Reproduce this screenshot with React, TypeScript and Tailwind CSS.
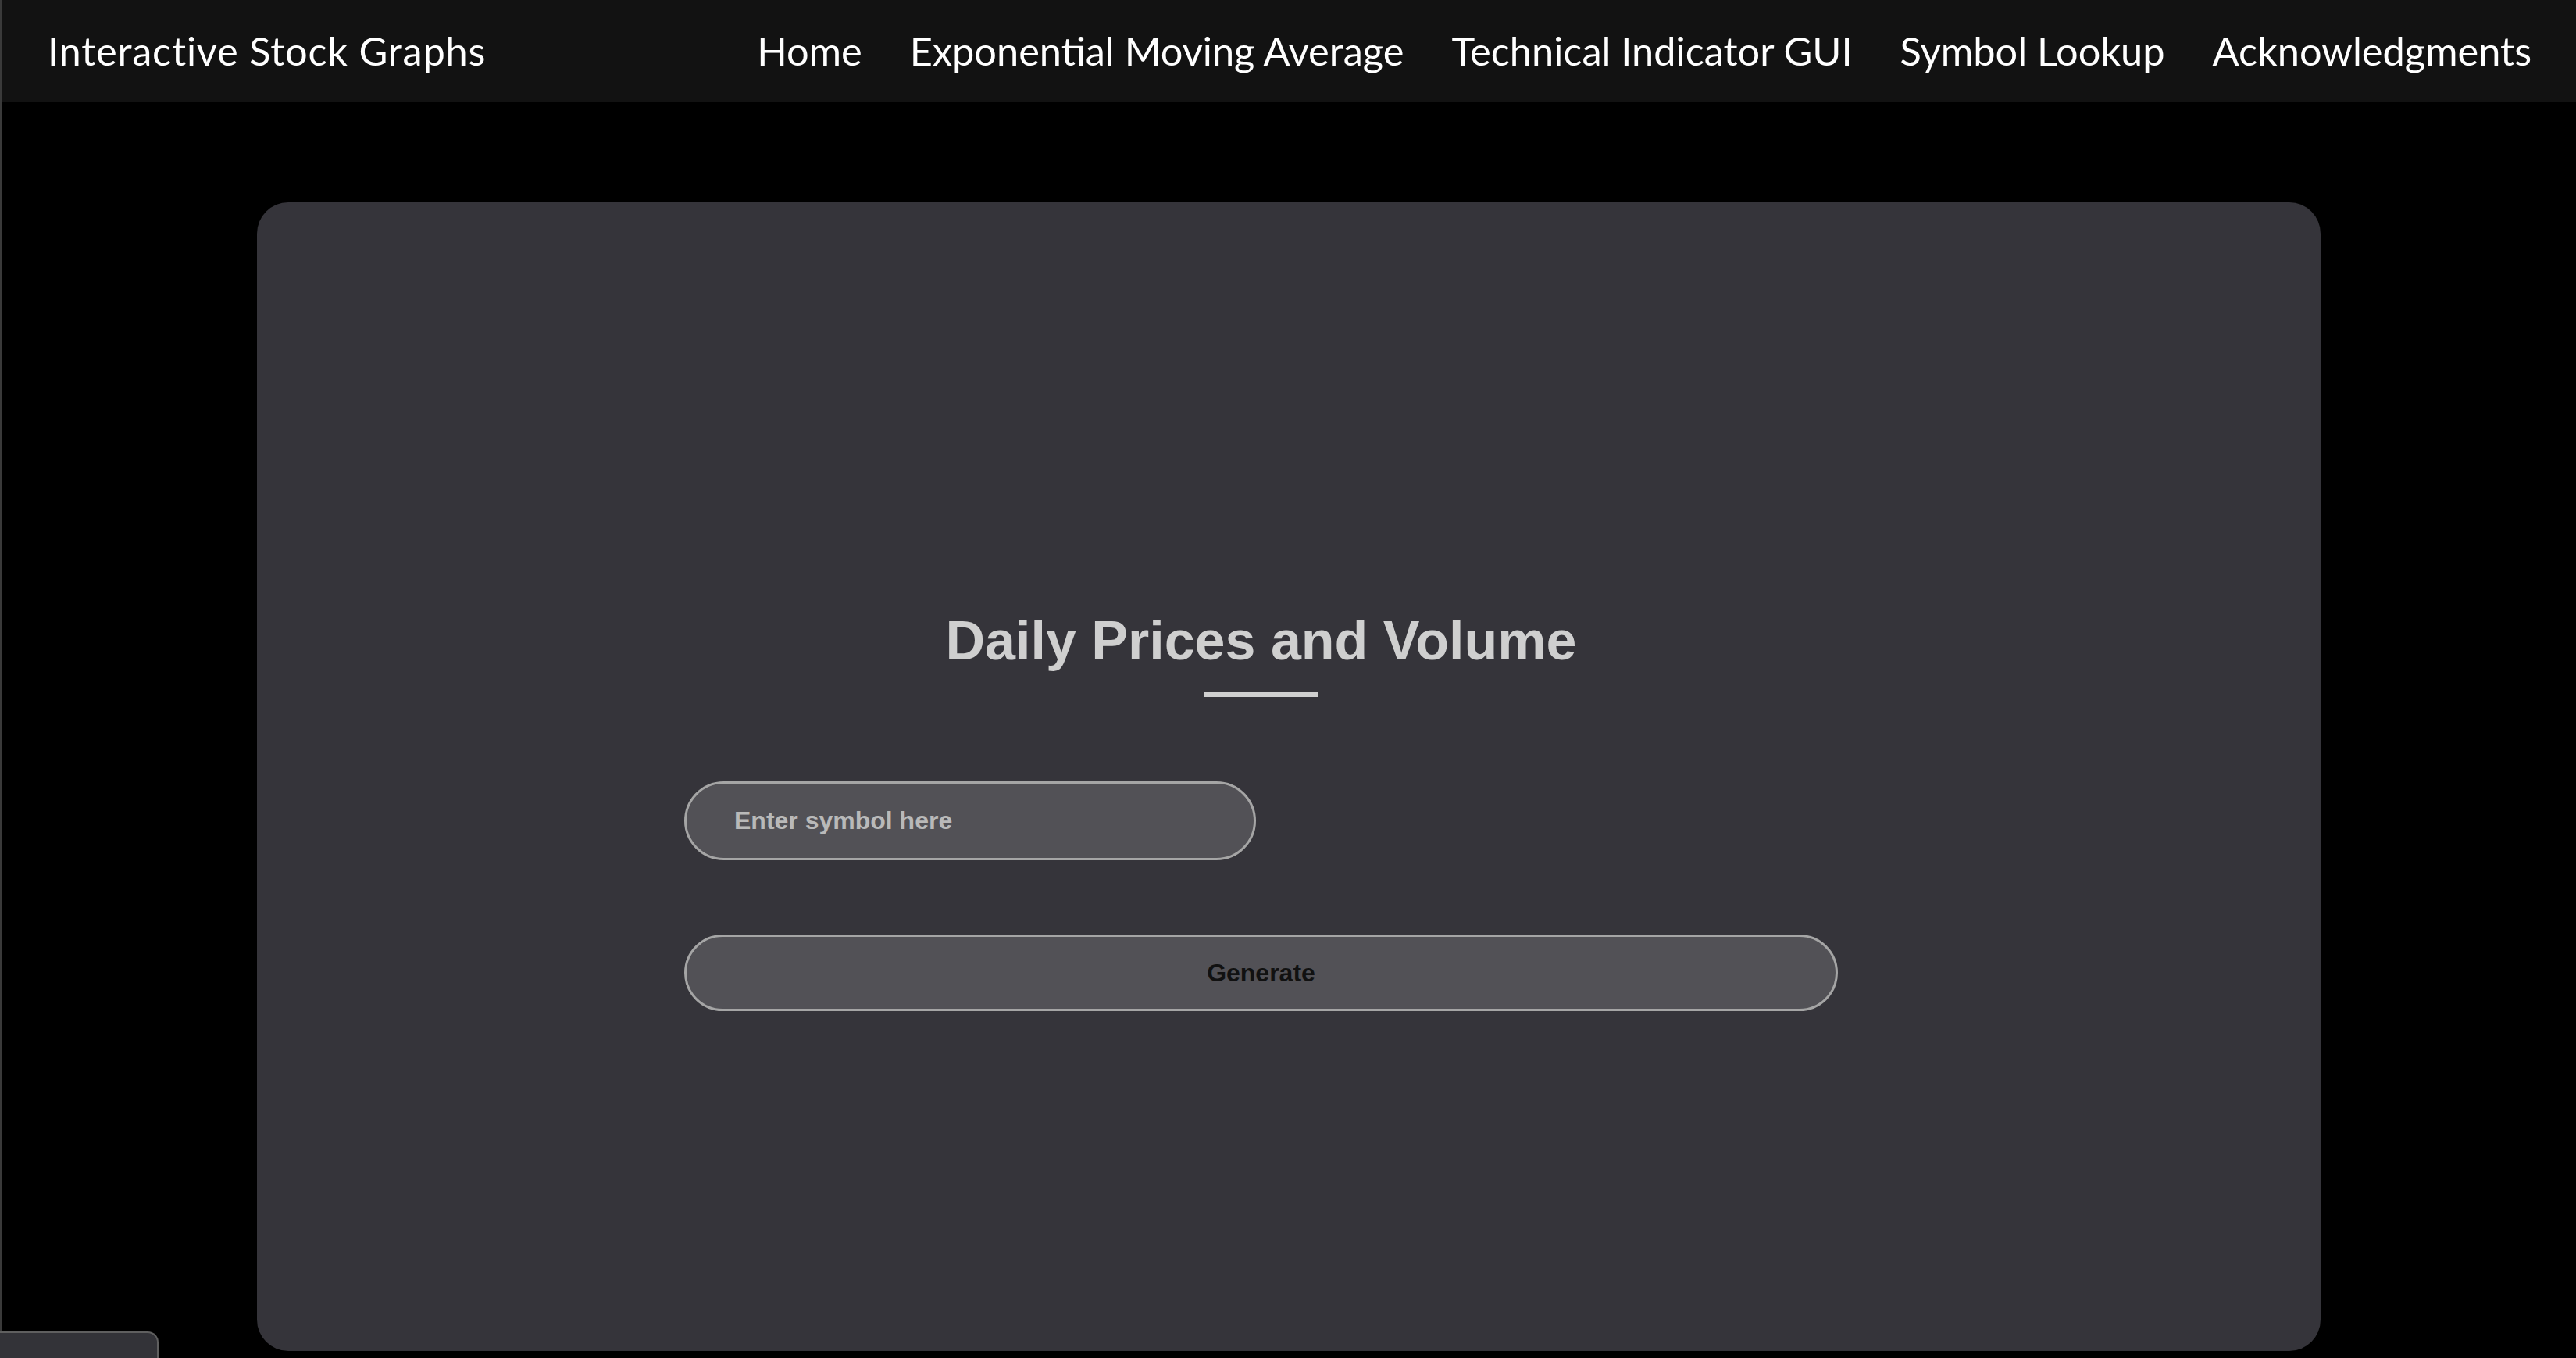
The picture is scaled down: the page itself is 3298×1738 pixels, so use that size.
import React, { useState } from "react";

const links = ["Home", "Exponential Moving Average", "Technical Indicator GUI", "Symbol Lookup", "Acknowledgments"];

const App: React.FC = () => {
  const [symbol, setSymbol] = useState<string>("");

  const handleSubmit = (e: React.FormEvent<HTMLFormElement>) => {
    e.preventDefault();
    console.log("Symbol:", symbol);
  };

  return (
    <div className="min-h-screen bg-black border-l-2 border-[#3a3a3a] overflow-hidden">
      <nav className="h-[130px] bg-[#121212] flex items-center justify-between pl-[59px] pr-[57px] font-['Lato','Open_Sans',sans-serif] font-normal text-white text-[50.5px]">
        <span className="tracking-[0.8px]">Interactive Stock Graphs</span>
        <div className="flex items-center gap-[61px]">
          {links.map((l) => (
            <a key={l} href="#" className="text-white">
              {l}
            </a>
          ))}
        </div>
      </nav>

      <div className="mx-auto mt-[129px] w-[2642px] h-[1470px] rounded-[40px] bg-[#35343a] pt-[526px] font-['Liberation_Sans',Arial,sans-serif]">
        <form onSubmit={handleSubmit} className="ml-[547px] w-[1477px] flex flex-col">
          <h1 className="text-[70px] leading-none font-bold text-center text-[#cfcfcf]">Daily Prices and Volume</h1>
          <div className="mx-auto mt-[31px] w-[146px] h-[6px] bg-[#d0d0d0]"></div>
          <input
            type="text"
            value={symbol}
            onChange={(e) => setSymbol(e.target.value)}
            placeholder="Enter symbol here"
            className="mt-[108px] w-[732px] h-[101px] rounded-full border-[3px] border-[#a5a5a5] bg-[#525156] pl-[61px] text-[32px] font-bold text-[#d0d0d0] placeholder:text-[#b9b9b9] outline-none"
          />
          <button
            type="submit"
            className="mt-[95px] w-full h-[98px] rounded-full border-[3px] border-[#a5a5a5] bg-[#525156] text-[32px] font-bold text-[#111111]"
          >
            Generate
          </button>
        </form>
      </div>

      <div className="fixed left-0 bottom-0 w-[203px] h-[34px] rounded-tr-[14px] border-t-2 border-r-2 border-[#5f5f5f] bg-[#333338]"></div>
    </div>
  );
};

export default App;
